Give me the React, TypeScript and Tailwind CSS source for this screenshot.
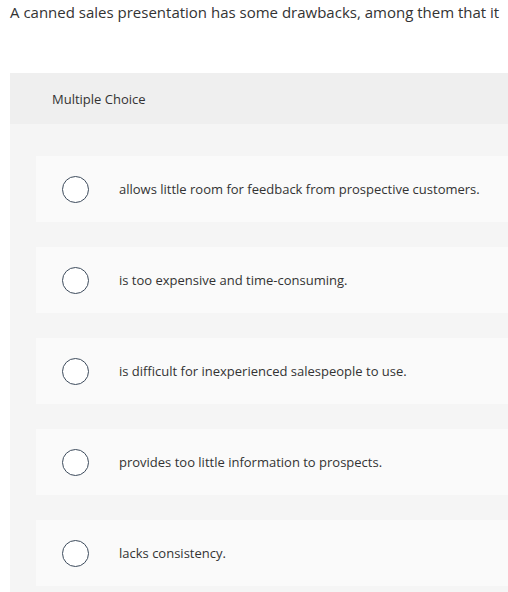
export default function App() {
  const options = [
    "allows little room for feedback from prospective customers.",
    "is too expensive and time-consuming.",
    "is difficult for inexperienced salespeople to use.",
    "provides too little information to prospects.",
    "lacks consistency.",
  ];
  return (
    <div className="w-[508px] h-[592px] overflow-hidden bg-white text-[#333333]" style={{ fontFamily: "'Open Sans', sans-serif" }}>
      <div className="pl-[10px] pt-[2px] h-[73px] text-[15px] leading-[20px] whitespace-nowrap">
        A canned sales presentation has some drawbacks, among them that it
      </div>
      <div className="ml-[10px] bg-[#f5f5f5] h-[519px]">
        <div className="h-[51px] bg-[#efefef] flex items-center pl-[42px] pt-[2px] text-[13px]">
          Multiple Choice
        </div>
        <div className="pl-[26px] pt-[32px] flex flex-col gap-[25px]">
          {options.map((o) => (
            <div key={o} className="h-[66px] bg-[#fafafa] flex items-center">
              <div className="ml-[26px] w-[27px] h-[27px] rounded-full border-[1.5px] border-[#3d4b5c] bg-white shrink-0" />
              <div className="ml-[30px] pt-[2px] text-[13px] whitespace-nowrap">{o}</div>
            </div>
          ))}
        </div>
      </div>
    </div>
  );
}
